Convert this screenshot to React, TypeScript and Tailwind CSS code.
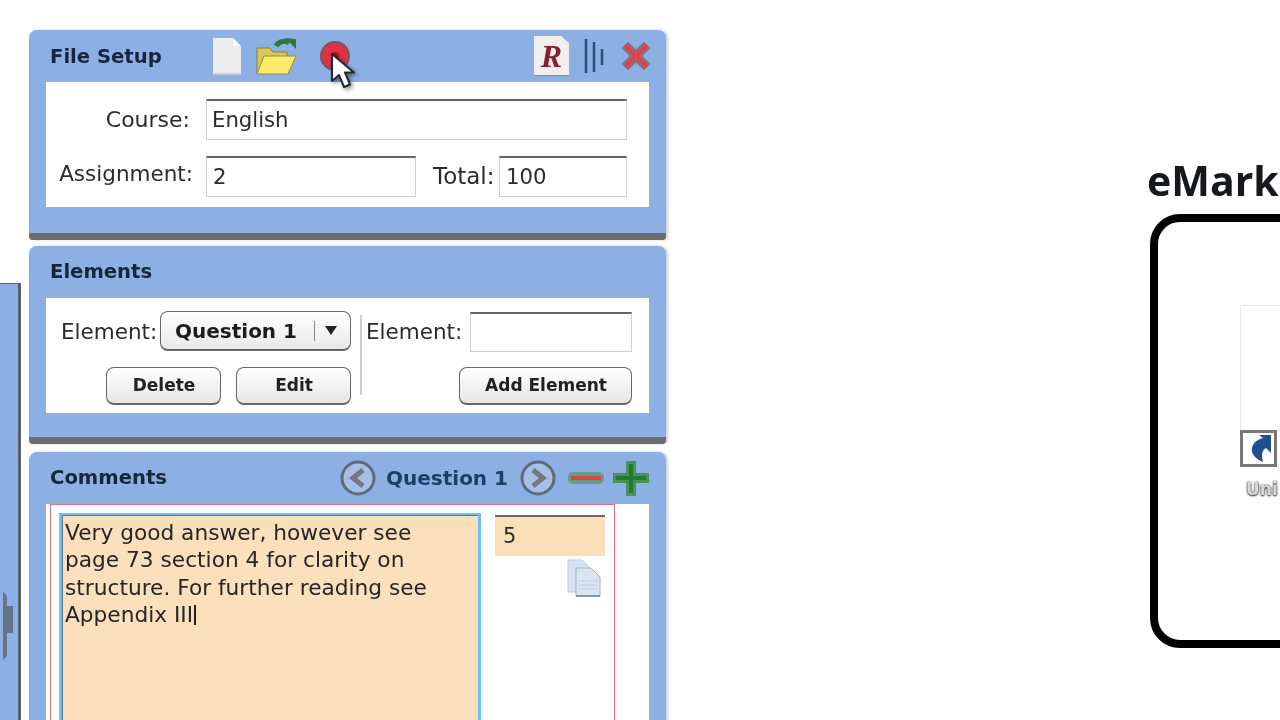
import type { ReactNode } from "react";

const inputCls = "flex items-center border border-[#cfcfcf] border-t-2 border-t-[#666] bg-white text-[21.200px] text-[#2b2b2b]";
const btnCls = "flex h-[38px] items-center justify-center rounded-lg border border-[#666] border-b-2 bg-gradient-to-b from-white to-[#e6e6e6] pl-px text-[17px] font-bold text-[#222]";

function Panel({ header, children, className }: { header: ReactNode; children: ReactNode; className?: string }) {
  return (
    <section className={`flex flex-col rounded-t-lg rounded-b-sm bg-[#8cafe4] shadow-[2px_0_3px_rgba(0,0,0,0.18)] ${className ?? ""}`}>
      <div className="relative flex h-[52px] shrink-0 items-center pl-[21px]">{header}</div>
      {children}
    </section>
  );
}

function Title({ children }: { children: ReactNode }) {
  return <h2 className="text-[19.600px] leading-none font-bold text-[#16263f]">{children}</h2>;
}

function NewFileIcon() {
  return (
    <svg width="30" height="38" viewBox="0 0 30 38" className="shrink-0">
      <path d="M1 1h20l8 8v28H1z" fill="#ececec" />
      <path d="M21 1l8 8h-8z" fill="#fbfbfb" />
      <path d="M1 37h28" stroke="#c9ced6" strokeWidth="1.5" />
    </svg>
  );
}

function FolderIcon() {
  return (
    <svg width="42" height="38" viewBox="0 0 42 38" className="shrink-0">
      <path d="M21 9c3-5 9-6 13-3" fill="none" stroke="#2c7a3c" strokeWidth="5" />
      <path d="M30 1l11 1v10z" fill="#2c7a3c" />
      <path d="M2 36V11h13l3 4h14v21z" fill="#dcc65a" stroke="#8c7f35" strokeWidth="1" />
      <path d="M2 37l7-18h32l-8 18z" fill="#fde96a" stroke="#9a8a38" strokeWidth="1" />
    </svg>
  );
}

function RecordIcon() {
  return (
    <svg width="30" height="30" viewBox="0 0 30 30" className="shrink-0">
      <circle cx="15" cy="15" r="14" fill="#e23044" stroke="#7a5560" strokeWidth="2" />
      <circle cx="15" cy="15" r="4" fill="#a8142a" />
    </svg>
  );
}

function CursorIcon() {
  return (
    <svg width="26" height="40" viewBox="0 0 26 40" className="absolute top-[22px] left-[301px] drop-shadow-[2px_2px_2px_rgba(0,0,0,0.45)]">
      <path d="M2 2v27l7-6 5 12 6-2.500-5-12h9z" fill="#fff" stroke="#23272e" strokeWidth="2" strokeLinejoin="round" />
    </svg>
  );
}

function ReportIcon() {
  return (
    <div className="relative flex h-[40px] w-[35px] shrink-0 items-center justify-center border-b border-[#7f8ca3] bg-[#efefef] [clip-path:polygon(0_0,78%_0,100%_18%,100%_100%,0_100%)]">
      <span className="font-['Liberation_Serif',serif] text-[32px] leading-none font-bold text-[#8d1c2c] italic">R</span>
    </div>
  );
}

function BarsIcon() {
  return (
    <svg width="22" height="34" viewBox="0 0 22 34" className="shrink-0">
      <path d="M2 0v34" stroke="#2f4f73" strokeWidth="2.500" />
      <path d="M10 3v30" stroke="#2f4f73" strokeWidth="2.500" />
      <path d="M18 10v16" stroke="#2f4f73" strokeWidth="2.500" />
    </svg>
  );
}

function CloseIcon() {
  return (
    <svg width="32" height="30" viewBox="0 0 32 30" className="shrink-0">
      <path d="M5 4l22 22M27 4L5 26" stroke="#86707e" strokeWidth="9" />
      <path d="M5 4l22 22M27 4L5 26" stroke="#e0404a" strokeWidth="4" />
    </svg>
  );
}

function NavCircle({ dir }: { dir: "left" | "right" }) {
  return (
    <svg width="36" height="36" viewBox="0 0 36 36" className="shrink-0">
      <circle cx="18" cy="18" r="16" fill="#a5bfe6" stroke="#5f6b78" strokeWidth="3" />
      <path d={dir === "left" ? "M23 10l-10 8 10 8" : "M13 10l10 8-10 8"} fill="none" stroke="#75787f" strokeWidth="5" />
    </svg>
  );
}

function MinusIcon() {
  return (
    <svg width="36" height="14" viewBox="0 0 36 14" className="shrink-0">
      <rect x="0" y="1" width="36" height="12" rx="5" fill="#6a9c8e" />
      <rect x="3" y="5" width="30" height="4" fill="#d64a42" />
    </svg>
  );
}

function PlusIcon() {
  return (
    <svg width="36" height="36" viewBox="0 0 36 36" className="shrink-0">
      <path d="M13 1h10v12h13v10H23v13H13V23H0V13h13z" fill="#4c8f58" />
      <path d="M16 4h4v12h13v4H20v13h-4V20H3v-4h13z" fill="#227a2e" />
    </svg>
  );
}

function CopyIcon() {
  return (
    <svg width="34" height="38" viewBox="0 0 34 38" className="shrink-0">
      <path d="M1 1h14l8 8v24H1z" fill="#d5e2f1" stroke="#b9cbe0" />
      <path d="M9 9h15l9 9v19H9z" fill="#dbe6f3" stroke="#9fb4cd" />
      <path d="M12 22h18M12 26h18M12 30h18" stroke="#bccde2" />
      <path d="M9 37h24" stroke="#6f7f92" strokeWidth="1.500" />
    </svg>
  );
}

function ShortcutIcon() {
  return (
    <div className="flex h-[37px] w-[37px] items-center justify-center border-[3px] border-[#777] bg-white">
      <svg width="24" height="29" viewBox="0 0 24 29">
        <path d="M24 1v18l-5-5c-4 2-5 7-3 14C8 25 2 18 6 11c2-4 6-6 10-7L12 1z" fill="#1f4f8f" />
      </svg>
    </div>
  );
}

export default function App() {
  return (
    <div className="flex h-[720px] w-[1280px] overflow-hidden bg-white font-['DejaVu_Sans',sans-serif] blur-[0.4px]">
      {/* collapsed side panel */}
      <aside className="mt-[283px] flex h-[437px] w-[21px] shrink-0 items-start border-t border-r-[3px] border-[#5c5f66] bg-[#8cafe4] pt-[308px] pl-[3px]">
        <svg width="10" height="68" viewBox="0 0 10 68">
          <path d="M0 0l4 4v10h6v27H4v23l-4 4z" fill="#667386" />
        </svg>
      </aside>

      <main className="ml-[8px] flex w-[637px] shrink-0 flex-col pt-[30px]">
        <Panel
          header={
            <>
              <div className="mt-px w-[162px] shrink-0"><Title>File Setup</Title></div>
              <NewFileIcon />
              <div className="ml-[13px]"><FolderIcon /></div>
              <div className="ml-[23px]"><RecordIcon /></div>
              <div className="ml-[184px]"><ReportIcon /></div>
              <div className="ml-[15px]"><BarsIcon /></div>
              <div className="ml-[14px]"><CloseIcon /></div>
              <CursorIcon />
            </>
          }
        >
          <div className="mx-[17px] h-[125px] bg-white pt-[17px] text-[#2b2b2b]">
            <div className="flex h-[41px] items-center">
              <span className="w-[144px] shrink-0 text-right text-[22px]">Course:</span>
              <div className={`${inputCls} ml-[16px] h-[41px] w-[421px] pl-[5px]`}>English</div>
            </div>
            <div className="mt-[16px] flex h-[41px] items-center">
              <span className="-mt-[4px] w-[147px] shrink-0 text-right text-[21.500px]">Assignment:</span>
              <div className={`${inputCls} ml-[13px] h-[41px] w-[210px] pl-[6px]`}>2</div>
              <span className="ml-[17px] w-[61px] shrink-0 text-[23px]">Total:</span>
              <div className={`${inputCls} ml-[5px] h-[41px] w-[128px] pl-[6px]`}>100</div>
            </div>
          </div>
          <div className="h-[26px]" />
          <div className="h-[7px] rounded-b-sm bg-[#6d6d6d]" />
        </Panel>

        <Panel className="mt-[6px]" header={<Title>Elements</Title>}>
          <div className="mx-[17px] flex h-[115px] bg-white pt-[13px] pl-[15px] text-[21.500px] text-[#2b2b2b]">
            <div className="w-[290px] shrink-0">
              <div className="flex h-[40px] items-center justify-between">
                <span className="mt-[2px]">Element:</span>
                <div className="flex h-[40px] w-[191px] items-center rounded-lg border border-[#666] border-b-2 bg-gradient-to-b from-white to-[#e9e9e9] pl-[14px] text-[20px] font-bold text-[#1c1c1c]">
                  <span className="mt-px w-[139px] shrink-0">Question 1</span>
                  <span className="h-[20px] w-px bg-[#888]" />
                  <svg width="12" height="9" viewBox="0 0 12 9" className="ml-[10px]"><path d="M0 0h12L6 9z" fill="#222" /></svg>
                </div>
              </div>
              <div className="mt-[16px] flex justify-end gap-[15px]">
                <div className={`${btnCls} w-[115px]`}>Delete</div>
                <div className={`${btnCls} w-[115px]`}>Edit</div>
              </div>
            </div>
            <div className="mt-[4px] ml-[9px] h-[80px] w-[2px] bg-[#cfcfcf]" />
            <div className="ml-[4px] w-[266px] shrink-0">
              <div className="flex h-[40px] items-center justify-between">
                <span className="mt-[2px]">Element:</span>
                <div className={`${inputCls} mt-px h-[40px] w-[162px]`} />
              </div>
              <div className="mt-[16px] flex justify-end">
                <div className={`${btnCls} w-[173px]`}>Add Element</div>
              </div>
            </div>
          </div>
          <div className="h-[24px]" />
          <div className="h-[7px] rounded-b-sm bg-[#6d6d6d]" />
        </Panel>

        <Panel
          className="mt-[8px] flex-1"
          header={
            <>
              <div className="w-[290px] shrink-0"><Title>Comments</Title></div>
              <NavCircle dir="left" />
              <span className="ml-[10px] w-[134px] shrink-0 text-[20px] font-bold text-[#1d3f66]">Question 1</span>
              <NavCircle dir="right" />
              <div className="ml-[12px]"><MinusIcon /></div>
              <div className="ml-[9px]"><PlusIcon /></div>
            </>
          }
        >
          <div className="mx-[17px] flex-1 overflow-hidden bg-white pl-[4px]">
            <div className="flex h-[300px] w-[565px] border border-b-0 border-[#e5707c] pt-[8px] pl-[8px]">
              <div className="h-[300px] w-[422px] shrink-0 border-[3px] border-t-[2px] border-[#6cc3f2] bg-[#fcdfbd] pl-[3px] text-[21.700px] leading-[27.300px] text-[#262626] shadow-[inset_1px_1px_0_#66707c]">
                <div className="mt-[4px]">
                  Very good answer, however see
                  <br />
                  page 73 section 4 for clarity on
                  <br />
                  structure. For further reading see
                  <br />
                  Appendix III<span className="ml-px inline-block h-[20px] w-[2px] align-[-3px] bg-[#222]" />
                </div>
              </div>
              <div className="ml-[14px] flex w-[110px] shrink-0 flex-col items-end pt-[2px]">
                <div className="flex h-[41px] w-full items-center border-t-2 border-[#6a6a6a] bg-[#fbdfbb] pl-[8px] text-[21px] text-[#2b2b2b]">5</div>
                <div className="mt-[3px] mr-[4px]"><CopyIcon /></div>
              </div>
            </div>
          </div>
        </Panel>
      </main>

      {/* preview column, runs off the right edge */}
      <div className="ml-[481px] w-[200px] shrink-0 pt-[153px]">
        <h1 className="font-['Open_Sans',sans-serif] text-[41px] leading-[54px] font-bold whitespace-nowrap text-[#15181d]">eMark</h1>
        <div className="mt-[7px] ml-[3px] h-[434px] w-[300px] rounded-[30px] border-8 border-black bg-white pt-[83px] pl-[82px]">
          <div className="h-[126px] border border-[#e8e8e8]" />
          <div className="-mt-px"><ShortcutIcon /></div>
          <div className="mt-[10px] ml-[6px] text-[17px] font-bold text-[#d8d8d8] [text-shadow:0_1px_2px_#333,0_0_2px_#333]">Uni</div>
        </div>
      </div>
    </div>
  );
}
